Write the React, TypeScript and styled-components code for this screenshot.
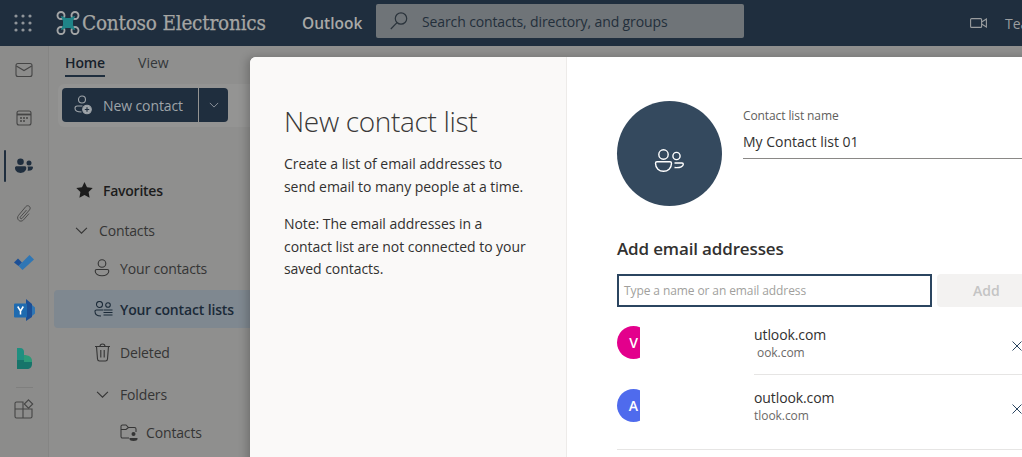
import styled, { createGlobalStyle } from "styled-components";

const GlobalStyle = createGlobalStyle`
  html, body {
    margin: 0;
    padding: 0;
    height: 100%;
    overflow: hidden;
    background: #8f8f8e;
    font-family: "Open Sans", "Noto Sans", sans-serif;
  }
  * { box-sizing: border-box; }
`;

const Page = styled.div`
  position: relative;
  width: 1022px;
  height: 457px;
  overflow: hidden;
  display: flex;
  flex-direction: column;
`;

/* top bar */
const Header = styled.header`
  height: 46px;
  flex: none;
  background: #1f2e3e;
  display: flex;
  align-items: center;
  color: #a7a7a5;

  & > * {
    flex: none;
  }
`;
const WaffleSlot = styled.div`
  width: 46px;
  display: flex;
  justify-content: center;
  margin-right: 10px;
  color: #8f9499;
`;
const BrandName = styled.span`
  font-family: "DejaVu Serif Condensed", "DejaVu Serif", serif;
  font-size: 20.5px;
  letter-spacing: -0.2px;
  -webkit-text-stroke: 0.25px #a5a5a3;
  margin-left: 2px;
  width: 220px;
  white-space: nowrap;
  color: #a5a5a3;
`;
const AppName = styled.span`
  font-size: 15.5px;
  font-weight: 600;
  width: 74px;
  color: #a9a9a7;
`;
const SearchBox = styled.div`
  width: 368px;
  height: 34px;
  margin-top: -4px;
  border-radius: 2px;
  background: #6f7478;
  display: flex;
  align-items: center;
  padding-left: 13px;
  gap: 13px;
  color: #232f3b;
  font-size: 14px;
  letter-spacing: -0.12px;
`;
const HeaderRight = styled.div`
  margin-left: 226px;
  display: flex;
  align-items: center;
  gap: 17px;
  font-size: 14px;
  white-space: nowrap;
  color: #9a9d9f;
`;

/* body under the bar */
const Main = styled.div`
  flex: 1;
  display: flex;
  min-height: 0;
`;
const Rail = styled.nav`
  width: 49px;
  flex: none;
  background: #8c8c8b;
  border-right: 1px solid #858584;
  display: flex;
  flex-direction: column;
  align-items: center;
`;
const RailSlot = styled.div<{ $h: number; $active?: boolean }>`
  position: relative;
  width: 100%;
  height: ${(p) => p.$h}px;
  display: flex;
  align-items: center;
  justify-content: center;
  color: #454545;

  ${(p) =>
    p.$active &&
    `&::before {
      content: "";
      position: absolute;
      left: 4px;
      top: 8px;
      bottom: 8px;
      width: 2px;
      background: #1f2e3e;
      border-radius: 1px;
    }`}
`;
const RailDivider = styled.div`
  width: 17px;
  height: 1px;
  background: #7f7f7e;
  margin: 5px 0 7px;
`;

const Pane = styled.div`
  flex: 1;
  background: #8f8f8e;
  min-width: 0;
`;
const Tabs = styled.div`
  display: flex;
  gap: 33px;
  padding: 7px 0 0 16px;
  height: 33px;
`;
const Tab = styled.div<{ $active?: boolean }>`
  position: relative;
  font-size: 14px;
  line-height: 20px;
  letter-spacing: ${(p) => (p.$active ? "-0.1px" : "0")};
  color: ${(p) => (p.$active ? "#17212b" : "#33373a")};
  font-weight: ${(p) => (p.$active ? 600 : 400)};

  ${(p) =>
    p.$active &&
    `&::after {
      content: "";
      position: absolute;
      left: 0;
      right: 0;
      top: 22px;
      height: 2px;
      background: #1f2e3e;
    }`}
`;
const Ribbon = styled.div`
  margin: 5px 0 0 9px;
  height: 43px;
  padding: 4px;
  border-radius: 6px 0 0 6px;
  background: #949493;
  display: flex;
  gap: 1px;
`;
const RibbonButton = styled.div`
  height: 34px;
  background: #1f2e3e;
  color: #9ea4a9;
  display: flex;
  align-items: center;
  font-size: 14px;
  letter-spacing: -0.1px;
`;
const NewContact = styled(RibbonButton)`
  width: 136px;
  padding-left: 11px;
  gap: 10px;
  border-radius: 4px 0 0 4px;
`;
const SplitChevron = styled(RibbonButton)`
  width: 29px;
  justify-content: center;
  border-radius: 0 4px 4px 0;
`;

const Tree = styled.ul`
  list-style: none;
  margin: 42px 0 0;
  padding: 0 0 0 5px;
`;
const TreeItem = styled.li<{
  $indent: number;
  $h?: number;
  $top?: number;
  $selected?: boolean;
  $strong?: boolean;
}>`
  height: ${(p) => p.$h ?? 38}px;
  margin-top: ${(p) => p.$top ?? 0}px;
  padding-left: ${(p) => p.$indent}px;
  display: flex;
  align-items: center;
  font-size: 14px;
  letter-spacing: ${(p) => (p.$strong ? "-0.25px" : "-0.15px")};
  border-radius: 4px 0 0 4px;
  color: ${(p) => (p.$selected ? "#1b2a38" : p.$strong ? "#1c1c1c" : "#353535")};
  font-weight: ${(p) => (p.$selected || p.$strong ? 600 : 400)};
  background: ${(p) => (p.$selected ? "#7f8890" : "transparent")};
`;
const TreeIcon = styled.span<{ $w: number }>`
  width: ${(p) => p.$w}px;
  flex: none;
  display: flex;
  align-items: center;
`;

/* dialog */
const Dialog = styled.section`
  position: absolute;
  left: 250px;
  top: 57px;
  width: 900px;
  height: 500px;
  display: flex;
  border-radius: 6px 0 0 0;
  overflow: hidden;
  background: #fff;
  box-shadow: -3px 0 8px rgba(0, 0, 0, 0.22);
`;
const Intro = styled.div`
  width: 317px;
  flex: none;
  background: #faf9f8;
  border-right: 1px solid #edebe9;
  padding: 44px 20px 0 34px;
  color: #323130;
`;
const IntroTitle = styled.h1`
  margin: 0 0 12px;
  font-size: 28px;
  line-height: 40px;
  font-weight: 300;
  letter-spacing: -0.33px;
  color: #3a3938;
`;
const IntroText = styled.p`
  margin: 0 0 15px;
  font-size: 14px;
  line-height: 22.5px;
  letter-spacing: -0.05px;
  white-space: nowrap;
`;
const Form = styled.div`
  flex: 1;
  padding: 44px 0 0 50px;
`;
const NameRow = styled.div`
  display: flex;
  gap: 21px;
`;
const BigAvatar = styled.div`
  width: 105px;
  height: 105px;
  flex: none;
  border-radius: 50%;
  background: #34495e;
  color: #fff;
  display: flex;
  align-items: center;
  justify-content: center;
  padding: 14px 2px 0 0;
`;
const NameField = styled.div`
  width: 500px;
  padding-top: 6px;
`;
const FieldLabel = styled.div`
  font-size: 12px;
  line-height: 18px;
  letter-spacing: -0.1px;
  color: #605e5c;
`;
const FieldValue = styled.div`
  height: 34px;
  line-height: 34px;
  font-size: 14px;
  color: #323130;
  border-bottom: 1px solid #8a8886;
`;
const SectionTitle = styled.h2`
  margin: 31px 0 13px;
  font-size: 17px;
  line-height: 24px;
  font-weight: 600;
  letter-spacing: -0.15px;
  color: #323130;
`;
const AddRow = styled.div`
  display: flex;
  gap: 5px;
`;
const AddressInput = styled.div`
  width: 315px;
  height: 33px;
  border: 2px solid #2b4560;
  padding-left: 5px;
  display: flex;
  align-items: center;
  font-size: 12px;
  letter-spacing: -0.1px;
  color: #a19f9d;
`;
const AddButton = styled.div`
  width: 100px;
  height: 33px;
  border-radius: 4px;
  background: #f3f2f1;
  color: #c4c4c4;
  font-size: 14px;
  font-weight: 600;
  display: flex;
  align-items: center;
  padding-left: 36px;
`;
const Rows = styled.div`
  width: 405px;
  margin-top: 3px;
`;
const Person = styled.div<{ $divider: "partial" | "full"; $h: number; $pad?: number }>`
  position: relative;
  height: ${(p) => p.$h}px;
  padding-bottom: ${(p) => p.$pad ?? 0}px;
  display: flex;
  align-items: center;

  &::after {
    content: "";
    position: absolute;
    bottom: 0;
    right: 0;
    height: 1px;
    left: ${(p) => (p.$divider === "partial" ? "137px" : "0")};
    background: #e6e5e4;
  }
`;
/* avatar is cut by the redaction in the screenshot */
const AvatarClip = styled.div`
  width: 23px;
  height: 33px;
  flex: none;
  overflow: hidden;
  margin-right: 114px;
`;
const Avatar = styled.div<{ $color: string }>`
  width: 33px;
  height: 33px;
  border-radius: 50%;
  background: ${(p) => p.$color};
  color: #fff;
  font-size: 14px;
  font-weight: 600;
  display: flex;
  align-items: center;
  justify-content: center;
`;
const Addresses = styled.div`
  width: 259px;
  padding-top: 2px;
`;
const Primary = styled.div`
  font-size: 14px;
  line-height: 18px;
  letter-spacing: -0.1px;
  color: #323130;
`;
const Secondary = styled.div<{ $inset?: number }>`
  font-size: 12px;
  line-height: 17px;
  letter-spacing: -0.05px;
  color: #6b6967;
  padding-left: ${(p) => p.$inset ?? 0}px;
`;
const RemoveIcon = styled.span`
  display: flex;
  color: #2b4560;
  margin: 6px 0 0 1px;
`;

const WaffleIcon = () => (
  <svg width="18" height="18" viewBox="0 0 18 18" fill="currentColor">
    {[2, 9, 16].flatMap((y) =>
      [2, 9, 16].map((x) => <circle key={`${x}-${y}`} cx={x} cy={y} r="1.6" />)
    )}
  </svg>
);

const LogoIcon = () => (
  <svg width="24" height="26" viewBox="0 0 24 26" fill="none">
    <g stroke="#a3a5a6" strokeWidth="1.9">
      <circle cx="5" cy="5.500" r="3.500" />
      <circle cx="19" cy="5.500" r="3.500" />
      <circle cx="5" cy="20.500" r="3.500" />
      <circle cx="19" cy="20.500" r="3.500" />
    </g>
    <path d="M5.500 6.500 10 8.500h4l4.500-2-2 4.500v4l2 4.500-4.500-2h-4l-4.500 2 2-4.500v-4z" fill="#1f8488" stroke="#1f8488" />
  </svg>
);

const SearchIcon = () => (
  <svg width="20" height="20" viewBox="0 0 20 20" fill="none" stroke="#2a333b" strokeWidth="1.2">
    <circle cx="12" cy="7.500" r="5.700" />
    <path d="M8 11.600 1.800 18" />
  </svg>
);

const VideoIcon = () => (
  <svg width="18" height="12" viewBox="0 0 18 12" fill="none" stroke="currentColor" strokeWidth="1.100">
    <rect x="0.600" y="1.600" width="11" height="8.800" rx="1" />
    <path d="M11.600 5 16.400 2v8l-4.800-3" />
  </svg>
);

const PersonAddIcon = () => (
  <svg width="20" height="20" viewBox="0 0 20 20" fill="none" stroke="currentColor" strokeWidth="1.100">
    <circle cx="9" cy="4.500" r="3.500" />
    <path d="M9.500 11H4.200C3 11 2 12 2 13.200c0 2.400 2.500 3.800 6.500 3.800" />
    <circle cx="14" cy="14.500" r="4.300" fill="currentColor" />
    <path d="M14 12.300v4.400M11.800 14.500h4.400" stroke="#1f2e3e" />
  </svg>
);

const Chevron = ({ size = 12 }: { size?: number }) => (
  <svg width={size} height={size} viewBox="0 0 12 12" fill="none" stroke="currentColor" strokeWidth="1">
    <path d="M1 3.500 6 8.500 11 3.500" />
  </svg>
);

const MailIcon = () => (
  <svg width="18" height="16" viewBox="0 0 18 16" fill="none" stroke="currentColor" strokeWidth="1.100">
    <rect x="1" y="1.500" width="16" height="13" rx="2" />
    <path d="M1.300 4 9 8.500 16.700 4" />
  </svg>
);

const CalendarIcon = () => (
  <svg width="16" height="16" viewBox="0 0 16 16" fill="none" stroke="currentColor" strokeWidth="1.100">
    <rect x="1" y="1" width="14" height="14" rx="2" />
    <path d="M1 4.500h14" strokeWidth="1.800" />
    <path d="M4 8h2M7 8h2M10 8h2M4 11h2M7 11h2" strokeWidth="1.400" />
  </svg>
);

const PeopleIcon = () => (
  <svg width="20" height="16" viewBox="0 0 20 16" fill="#1f2e3e">
    <circle cx="6.500" cy="3.800" r="3.300" />
    <circle cx="15" cy="5" r="2.500" />
    <path d="M1 9.800C1 8.800 1.800 8.300 2.600 8.300h8c1 0 1.700.7 1.700 1.500 0 3.200-2.800 5.200-5.700 5.200C3.600 15 1 13 1 9.800z" />
    <path d="M13.500 8.500h4.300c.7 0 1.200.5 1.200 1.100 0 2.200-2 3.400-5.400 3.200.5-1.300.5-2.900-.1-4.300z" />
  </svg>
);

const ClipIcon = () => (
  <svg width="16" height="18" viewBox="0 0 16 18" fill="none" stroke="#4c4c4c" strokeWidth="1">
    <path d="M10.500 5 4.500 11.800c-1 1.200 .4 2.600 1.600 1.600l7.400-8.500c2.200-2.600-1.400-5.800-3.700-3.300L2.600 10.300c-3.100 3.700 1.700 8 4.900 4.600l5.500-6.300" />
  </svg>
);

const TodoIcon = () => (
  <svg width="20" height="16" viewBox="0 0 20 16">
    <path d="M0 8.500 4 4.500 8 8.500 4.500 12z" fill="#1c4f96" />
    <path d="M4.500 12 8 8.500 15.500 1 20 5.500 8.500 16z" fill="#2f76b4" />
  </svg>
);

const YammerIcon = () => (
  <svg width="21" height="22" viewBox="0 0 21 22">
    <path d="M12 0 18 5v13l-6 4z" fill="#1c4f96" />
    <path d="M18 6 21 8.500v6L18 17z" fill="#2f76b4" />
    <rect x="0" y="4.500" width="13" height="14" rx="1" fill="#1f6bb0" />
    <path d="M3.700 7.500 6.500 12v3.500M9.300 7.500 6.500 12" fill="none" stroke="#fff" strokeWidth="1.500" />
  </svg>
);

const BookingsIcon = () => (
  <svg width="15" height="21" viewBox="0 0 15 21">
    <path d="M0 0h3c3 0 4 2 4 4v8H0z" fill="#1f8f80" />
    <path d="M7 7c4.500 0 8 2 8 6v1H7z" fill="#2c9a78" />
    <path d="M0 12h7v2h8v2c0 3-2 5-5 5H0z" fill="#17746a" />
  </svg>
);

const AppsIcon = () => (
  <svg width="20" height="20" viewBox="0 0 20 20" fill="none" stroke="currentColor" strokeWidth="1.100">
    <path d="M1 4.500C1 3.700 1.700 3 2.500 3H9v7H1zM1 10h8v9H2.500C1.700 19 1 18.300 1 17.500zM9 10h9v7.500c0 .8-.7 1.500-1.500 1.500H9z" />
    <path d="m14.500 .8 4.200 4.200-4.200 4.200-4.200-4.200z" />
  </svg>
);

const StarIcon = () => (
  <svg width="17" height="16" viewBox="0 0 17 16" fill="#1c1c1c">
    <path d="M8.500 0 11 5.200l5.700.8-4.100 4 1 5.700-5.100-2.700-5.100 2.700 1-5.700-4.100-4 5.700-.8z" />
  </svg>
);

const PersonIcon = () => (
  <svg width="16" height="18" viewBox="0 0 16 18" fill="none" stroke="currentColor" strokeWidth="1.100">
    <circle cx="8" cy="4.500" r="3.800" />
    <path d="M1.200 12c0-.9.700-1.500 1.500-1.500h10.600c.8 0 1.500.6 1.500 1.500 0 3-3.200 4.700-6.800 4.700S1.200 15 1.200 12z" />
  </svg>
);

const ListPeopleIcon = () => (
  <svg width="19" height="16" viewBox="0 0 19 16" fill="none" stroke="currentColor" strokeWidth="1.050">
    <circle cx="5.500" cy="3.500" r="3" />
    <circle cx="14" cy="4" r="2.300" />
    <path d="M9 9H2.500C1.500 9 1 9.600 1 10.400 1 13 3.200 15 7 15" />
    <path d="M9.500 9h9M9.500 11.500h9M9.500 14h9" />
  </svg>
);

const TrashIcon = () => (
  <svg width="17" height="19" viewBox="0 0 17 19" fill="none" stroke="currentColor" strokeWidth="1.100">
    <path d="M1 3.500h15M6 3.500C6 2 7 1 8.500 1S11 2 11 3.500M2.500 3.500 3.500 16c.1 1.200 1 2 2 2h6c1 0 1.900-.8 2-2l1-12.500M6.800 7v7.500M10.200 7v7.500" />
  </svg>
);

const FolderPersonIcon = () => (
  <svg width="18" height="17" viewBox="0 0 18 17" fill="none" stroke="currentColor" strokeWidth="1.050">
    <path d="M9 14H2.500C1.600 14 1 13.400 1 12.500v-10C1 1.600 1.600 1 2.500 1H6l2.500 2.500h6c.9 0 1.500.6 1.500 1.500v3" />
    <path d="M1 5.500h5L8.500 3.500" />
    <circle cx="13.500" cy="10" r="2" fill="currentColor" stroke="none" />
    <path d="M9.500 14h8v1c0 1-1.500 2-4 2s-4-1-4-2z" fill="currentColor" stroke="none" />
  </svg>
);

const GroupIcon = () => (
  <svg width="32" height="24" viewBox="0 0 32 24" fill="none" stroke="currentColor" strokeWidth="1.400">
    <circle cx="10.500" cy="5.500" r="4.700" />
    <circle cx="23.500" cy="7" r="3.600" />
    <path d="M2.500 14.300c0-.8.700-1.500 1.500-1.500h13c.8 0 1.500.7 1.500 1.500 0 5-3.700 8-8 8s-8-3-8-8z" />
    <path d="M21.500 14H29c.8 0 1.300.5 1.300 1.200 0 2-2.600 3.800-8.800 3.300" />
  </svg>
);

const CloseIcon = () => (
  <svg width="10" height="10" viewBox="0 0 10 10" fill="none" stroke="currentColor" strokeWidth="1">
    <path d="M.5.500l9 9M9.500.500l-9 9" />
  </svg>
);

export default function App() {
  return (
    <>
      <GlobalStyle />
      <Page>
        <Header>
          <WaffleSlot>
            <WaffleIcon />
          </WaffleSlot>
          <LogoIcon />
          <BrandName>Contoso Electronics</BrandName>
          <AppName>Outlook</AppName>
          <SearchBox>
            <SearchIcon />
            Search contacts, directory, and groups
          </SearchBox>
          <HeaderRight>
            <VideoIcon />
            Teams
          </HeaderRight>
        </Header>
        <Main>
          <Rail>
            <RailSlot $h={48}><MailIcon /></RailSlot>
            <RailSlot $h={48}><CalendarIcon /></RailSlot>
            <RailSlot $h={48} $active><PeopleIcon /></RailSlot>
            <RailSlot $h={48}><ClipIcon /></RailSlot>
            <RailSlot $h={48}><TodoIcon /></RailSlot>
            <RailSlot $h={48}><YammerIcon /></RailSlot>
            <RailSlot $h={48}><BookingsIcon /></RailSlot>
            <RailDivider />
            <RailSlot $h={28}><AppsIcon /></RailSlot>
          </Rail>
          <Pane>
            <Tabs>
              <Tab $active>Home</Tab>
              <Tab>View</Tab>
            </Tabs>
            <Ribbon>
              <NewContact>
                <PersonAddIcon />
                New contact
              </NewContact>
              <SplitChevron>
                <Chevron size={10} />
              </SplitChevron>
            </Ribbon>
            <Tree>
              <TreeItem $indent={22} $h={42} $strong>
                <TreeIcon $w={27}><StarIcon /></TreeIcon>
                Favorites
              </TreeItem>
              <TreeItem $indent={21}>
                <TreeIcon $w={24}><Chevron size={13} /></TreeIcon>
                Contacts
              </TreeItem>
              <TreeItem $indent={40}>
                <TreeIcon $w={26}><PersonIcon /></TreeIcon>
                Your contacts
              </TreeItem>
              <TreeItem $indent={40} $top={3} $selected>
                <TreeIcon $w={26}><ListPeopleIcon /></TreeIcon>
                Your contact lists
              </TreeItem>
              <TreeItem $indent={40} $top={5}>
                <TreeIcon $w={26}><TrashIcon /></TreeIcon>
                Deleted
              </TreeItem>
              <TreeItem $indent={42} $top={4}>
                <TreeIcon $w={24}><Chevron size={13} /></TreeIcon>
                Folders
              </TreeItem>
              <TreeItem $indent={66}>
                <TreeIcon $w={26}><FolderPersonIcon /></TreeIcon>
                Contacts
              </TreeItem>
            </Tree>
          </Pane>
        </Main>
        <Dialog>
          <Intro>
            <IntroTitle>New contact list</IntroTitle>
            <IntroText>
              Create a list of email addresses to
              <br />
              send email to many people at a time.
            </IntroText>
            <IntroText>
              Note: The email addresses in a
              <br />
              contact list are not connected to your
              <br />
              saved contacts.
            </IntroText>
          </Intro>
          <Form>
            <NameRow>
              <BigAvatar>
                <GroupIcon />
              </BigAvatar>
              <NameField>
                <FieldLabel>Contact list name</FieldLabel>
                <FieldValue>My Contact list 01</FieldValue>
              </NameField>
            </NameRow>
            <SectionTitle>Add email addresses</SectionTitle>
            <AddRow>
              <AddressInput>Type a name or an email address</AddressInput>
              <AddButton>Add</AddButton>
            </AddRow>
            <Rows>
              <Person $divider="partial" $h={65}>
                <AvatarClip><Avatar $color="#e3008c">V</Avatar></AvatarClip>
                <Addresses>
                  <Primary>utlook.com</Primary>
                  <Secondary $inset={3}>ook.com</Secondary>
                </Addresses>
                <RemoveIcon><CloseIcon /></RemoveIcon>
              </Person>
              <Person $divider="full" $h={75} $pad={14}>
                <AvatarClip><Avatar $color="#4f6bed">A</Avatar></AvatarClip>
                <Addresses>
                  <Primary>outlook.com</Primary>
                  <Secondary>tlook.com</Secondary>
                </Addresses>
                <RemoveIcon><CloseIcon /></RemoveIcon>
              </Person>
            </Rows>
          </Form>
        </Dialog>
      </Page>
    </>
  );
}
